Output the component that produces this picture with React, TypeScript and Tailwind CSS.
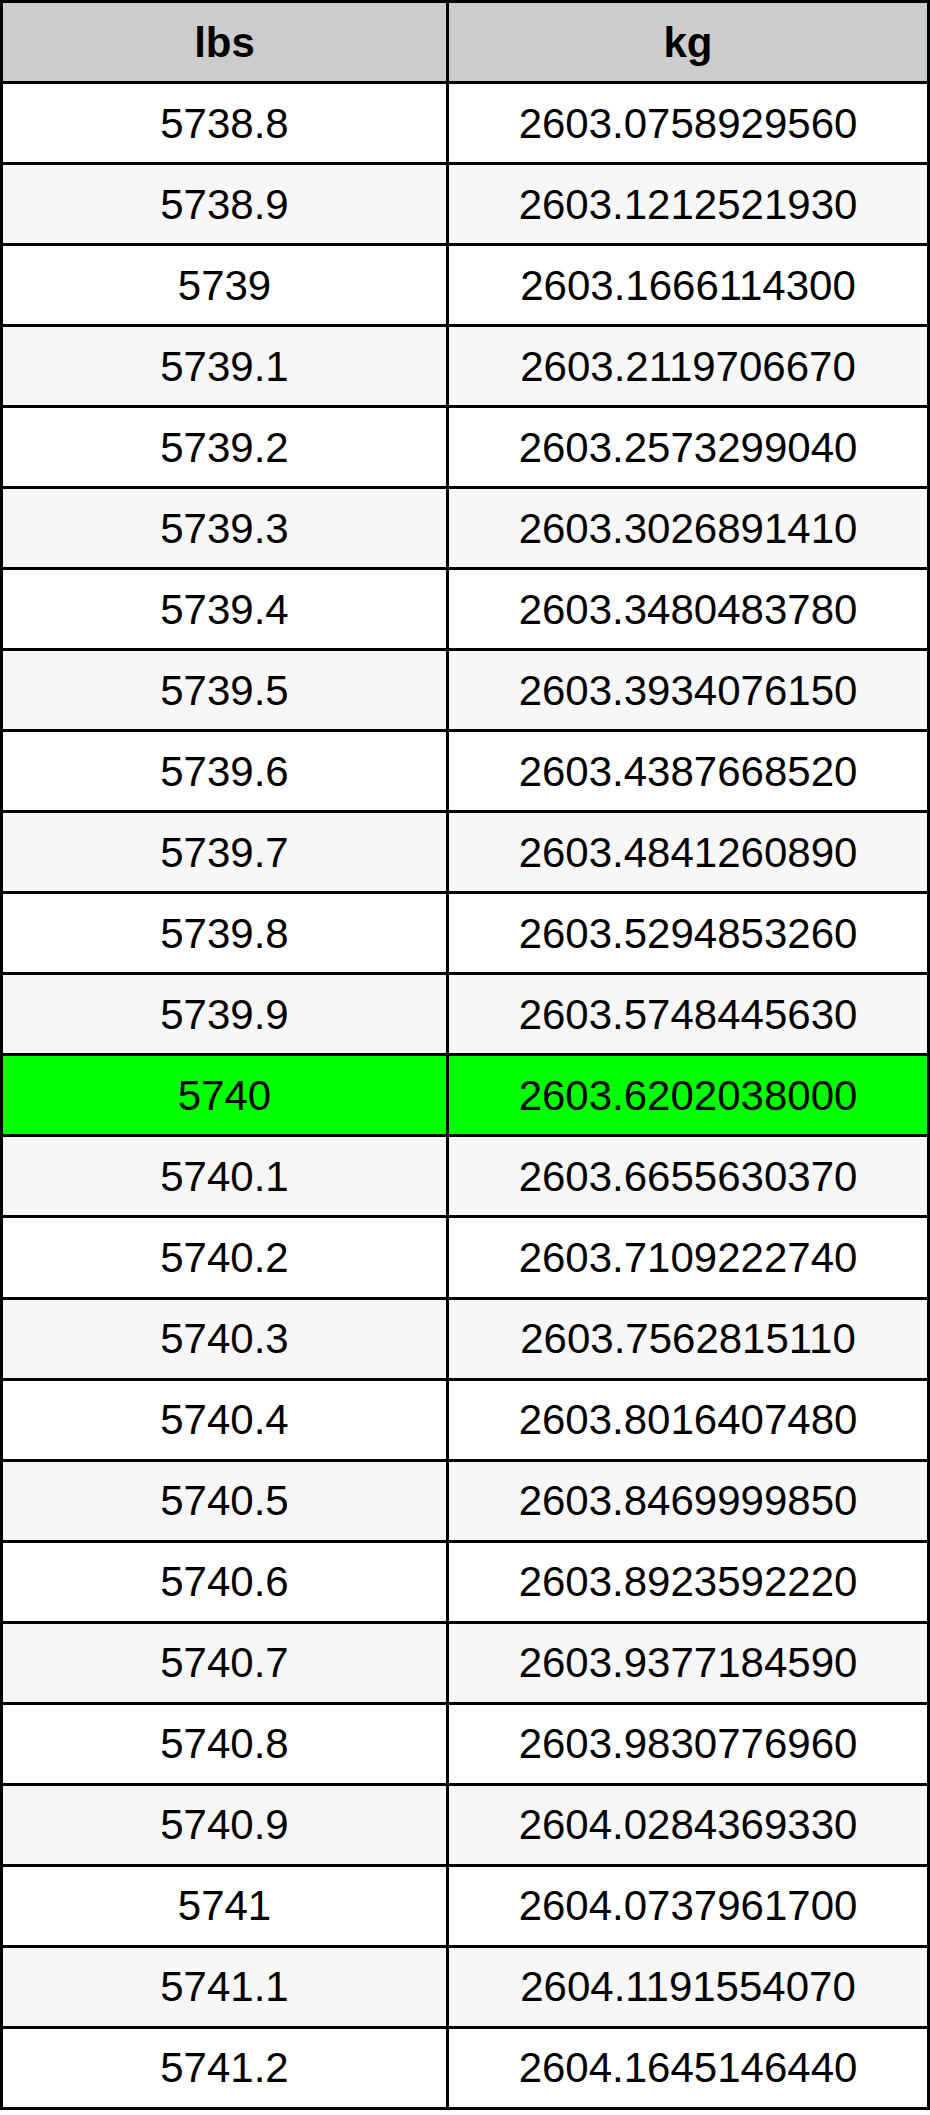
import React from 'react';

const rows: [string, string][] = [
  ['5738.8', '2603.0758929560'],
  ['5738.9', '2603.1212521930'],
  ['5739', '2603.1666114300'],
  ['5739.1', '2603.2119706670'],
  ['5739.2', '2603.2573299040'],
  ['5739.3', '2603.3026891410'],
  ['5739.4', '2603.3480483780'],
  ['5739.5', '2603.3934076150'],
  ['5739.6', '2603.4387668520'],
  ['5739.7', '2603.4841260890'],
  ['5739.8', '2603.5294853260'],
  ['5739.9', '2603.5748445630'],
  ['5740', '2603.6202038000'],
  ['5740.1', '2603.6655630370'],
  ['5740.2', '2603.7109222740'],
  ['5740.3', '2603.7562815110'],
  ['5740.4', '2603.8016407480'],
  ['5740.5', '2603.8469999850'],
  ['5740.6', '2603.8923592220'],
  ['5740.7', '2603.9377184590'],
  ['5740.8', '2603.9830776960'],
  ['5740.9', '2604.0284369330'],
  ['5741', '2604.0737961700'],
  ['5741.1', '2604.1191554070'],
  ['5741.2', '2604.1645146440'],
];

const App: React.FC = () => {
  return (
    <div className="w-[930px] h-[2115px] bg-white font-['Liberation_Sans',Arial,sans-serif] text-black text-[42px]">
      <div className="h-[2110px] border-[3px] border-black flex flex-col">
        {/* Header */}
        <div className="flex-1 flex bg-[#cccccc] font-bold">
          <div className="w-[446px] border-r-[3px] border-black flex items-center justify-center">lbs</div>
          <div className="flex-1 flex items-center justify-center">kg</div>
        </div>

        {rows.map(([lbs, kg], i) => {
          const bg = lbs === '5740' ? 'bg-[#00ff00]' : i % 2 === 0 ? 'bg-white' : 'bg-[#f7f7f7]';
          return (
            <div key={lbs} className={`flex-1 flex border-t-[3px] border-black ${bg}`}>
              <div className="w-[446px] border-r-[3px] border-black flex items-center justify-center">{lbs}</div>
              <div className="flex-1 flex items-center justify-center">{kg}</div>
            </div>
          );
        })}
      </div>
    </div>
  );
};

export default App;
